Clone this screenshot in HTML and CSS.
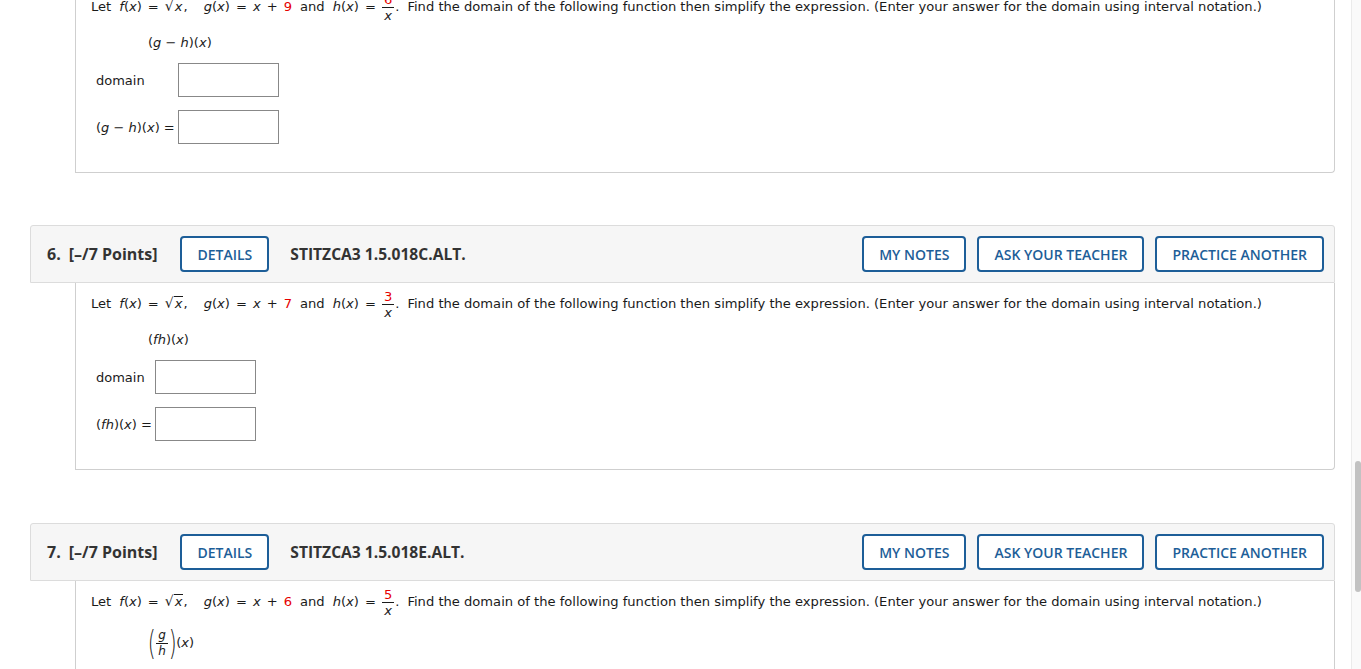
FILE: index.html
```html
<!DOCTYPE html>
<html>
<head>
<meta charset="utf-8">
<link rel="stylesheet" href="styles.css">
</head>
<body>
<div class="page">

  <section class="question first">
    <div class="qbody">
      <p class="stem">Let<span class="w"></span><i>f</i>(<i>x</i>)<span class="op">=</span><span class="sqrt">√<span class="rad"><i>x</i></span></span>,<span class="ww"></span><i>g</i>(<i>x</i>)<span class="op">=</span><i>x</i><span class="op">+</span><span class="red">9</span><span class="w"></span>and<span class="w"></span><i>h</i>(<i>x</i>)<span class="op">=</span><span class="frac"><span class="num red">6</span><span class="den"><i>x</i></span></span>.<span class="w"></span>Find the domain of the following function then simplify the expression. (Enter your answer for the domain using interval notation.)</p>
      <p class="sub">(<i>g</i> − <i>h</i>)(<i>x</i>)</p>
      <div class="answers">
        <span class="lbl">domain</span><span class="field"></span>
        <span class="lbl">(<i>g</i> − <i>h</i>)(<i>x</i>) =</span><span class="field"></span>
      </div>
    </div>
  </section>

  <section class="question">
    <header class="qhead">
      <span class="qnum">6.</span>
      <span class="pts">[–/7 Points]</span>
      <span class="btn">DETAILS</span>
      <span class="code">STITZCA3 1.5.018C.ALT.</span>
      <span class="spacer"></span>
      <span class="btn">MY NOTES</span>
      <span class="btn">ASK YOUR TEACHER</span>
      <span class="btn">PRACTICE ANOTHER</span>
    </header>
    <div class="qbody">
      <p class="stem">Let<span class="w"></span><i>f</i>(<i>x</i>)<span class="op">=</span><span class="sqrt">√<span class="rad"><i>x</i></span></span>,<span class="ww"></span><i>g</i>(<i>x</i>)<span class="op">=</span><i>x</i><span class="op">+</span><span class="red">7</span><span class="w"></span>and<span class="w"></span><i>h</i>(<i>x</i>)<span class="op">=</span><span class="frac"><span class="num red">3</span><span class="den"><i>x</i></span></span>.<span class="w"></span>Find the domain of the following function then simplify the expression. (Enter your answer for the domain using interval notation.)</p>
      <p class="sub">(<i>fh</i>)(<i>x</i>)</p>
      <div class="answers">
        <span class="lbl">domain</span><span class="field"></span>
        <span class="lbl">(<i>fh</i>)(<i>x</i>) =</span><span class="field"></span>
      </div>
    </div>
  </section>

  <section class="question">
    <header class="qhead">
      <span class="qnum">7.</span>
      <span class="pts">[–/7 Points]</span>
      <span class="btn">DETAILS</span>
      <span class="code">STITZCA3 1.5.018E.ALT.</span>
      <span class="spacer"></span>
      <span class="btn">MY NOTES</span>
      <span class="btn">ASK YOUR TEACHER</span>
      <span class="btn">PRACTICE ANOTHER</span>
    </header>
    <div class="qbody">
      <p class="stem">Let<span class="w"></span><i>f</i>(<i>x</i>)<span class="op">=</span><span class="sqrt">√<span class="rad"><i>x</i></span></span>,<span class="ww"></span><i>g</i>(<i>x</i>)<span class="op">=</span><i>x</i><span class="op">+</span><span class="red">6</span><span class="w"></span>and<span class="w"></span><i>h</i>(<i>x</i>)<span class="op">=</span><span class="frac"><span class="num red">5</span><span class="den"><i>x</i></span></span>.<span class="w"></span>Find the domain of the following function then simplify the expression. (Enter your answer for the domain using interval notation.)</p>
      <p class="sub sub-frac"><span class="bigparen">(</span><span class="frac small"><span class="num"><i>g</i></span><span class="den"><i>h</i></span></span><span class="bigparen">)</span>(<i>x</i>)</p>
      <div class="answers">
        <span class="lbl">domain</span><span class="field"></span>
        <span class="lbl">(<i>g</i>/<i>h</i>)(<i>x</i>) =</span><span class="field"></span>
      </div>
    </div>
  </section>

</div>
<div class="scrollbar"><div class="thumb"></div></div>
</body>
</html>
```

FILE: styles.css
```css
html, body {
  margin: 0;
  padding: 0;
  background: #fff;
  overflow: hidden;
}

.page {
  width: 1305px;
  padding-left: 30px;
  font-family: "DejaVu Sans", Verdana, sans-serif;
  font-size: 13px;
  color: #1a1a1a;
}

.question {
  margin-bottom: 53px;
}

.question.first {
  margin-top: -14px;
  margin-bottom: 52px;
}

.qhead {
  display: flex;
  align-items: center;
  height: 36px;
  padding: 10px 10px 10px 16px;
  background: #f6f6f6;
  border: 1px solid #dcdcdc;
  border-radius: 3px 3px 0 0;
  font-family: "Open Sans", sans-serif;
  color: #333;
}

.qnum {
  font-weight: 700;
  font-size: 16px;
  margin-right: 8px;
}

.pts {
  font-weight: 700;
  font-size: 16px;
  margin-right: 12px;
}

.code {
  font-weight: 700;
  font-size: 15.6px;
  margin-left: 21px;
}

.spacer {
  flex: 1;
}

.btn {
  display: inline-flex;
  align-items: center;
  box-sizing: border-box;
  height: 36px;
  padding: 0 15px;
  border: 2px solid #1d5e98;
  border-radius: 4px;
  background: #fff;
  color: #1d5e98;
  font-size: 14px;
  font-weight: 600;
  margin-left: 11px;
}

.qhead .btn:nth-of-type(1) {
  margin-left: 0;
}

.qbody {
  margin-left: 45px;
  padding: 11px 15px 28px 15px;
  border: 1px solid #cfcfcf;
  border-top: none;
  border-radius: 0 0 4px 0;
}

.stem {
  margin: 0;
  height: 20px;
  line-height: 20px;
  white-space: nowrap;
  font-size: 13.1px;
}

.w {
  display: inline-block;
  width: 8px;
}

.ww {
  display: inline-block;
  width: 16px;
}

.op {
  display: inline-block;
  margin: 0 6px;
}

.red {
  color: #e60000;
}

.sqrt {
  display: inline-block;
  font-size: 14px;
  line-height: 14px;
}

.rad {
  display: inline-block;
  border-top: 1px solid #1a1a1a;
  font-size: 13px;
  line-height: 13px;
  padding: 0 1px;
}

.frac {
  display: inline-flex;
  flex-direction: column;
  align-items: center;
  vertical-align: middle;
  line-height: 13px;
  margin: -6px 1px -6px 0;
}

.frac .num {
  padding: 0 2px 1px;
  border-bottom: 1px solid #1a1a1a;
}

.frac .den {
  padding: 1px 2px 0;
}

.sub {
  margin: 16px 0 0 57px;
  line-height: 20px;
}

.sub-frac {
  display: flex;
  align-items: center;
  margin-top: 15px;
}

.bigparen {
  display: inline-block;
  font-size: 34px;
  line-height: 32px;
  font-weight: 300;
  transform: scaleX(0.6);
  margin: 0 -3px;
}

.frac.small {
  font-size: 12px;
  line-height: 13px;
  margin: 0 1px;
}

.answers {
  display: grid;
  grid-template-columns: auto 101px;
  justify-content: start;
  align-items: center;
  row-gap: 13px;
  margin-top: 10px;
}

.lbl {
  padding: 0 3px 0 5px;
}

.field {
  box-sizing: border-box;
  height: 34px;
  border: 1px solid #888;
  background: #fff;
}

.scrollbar {
  position: fixed;
  top: 0;
  right: 0;
  width: 9px;
  height: 100%;
  background: #fafafa;
  border-left: 1px solid #ebebeb;
}

.thumb {
  position: absolute;
  top: 461px;
  left: 3px;
  width: 6px;
  height: 131px;
  border-radius: 3px;
  background: #c2c2c2;
}
```
